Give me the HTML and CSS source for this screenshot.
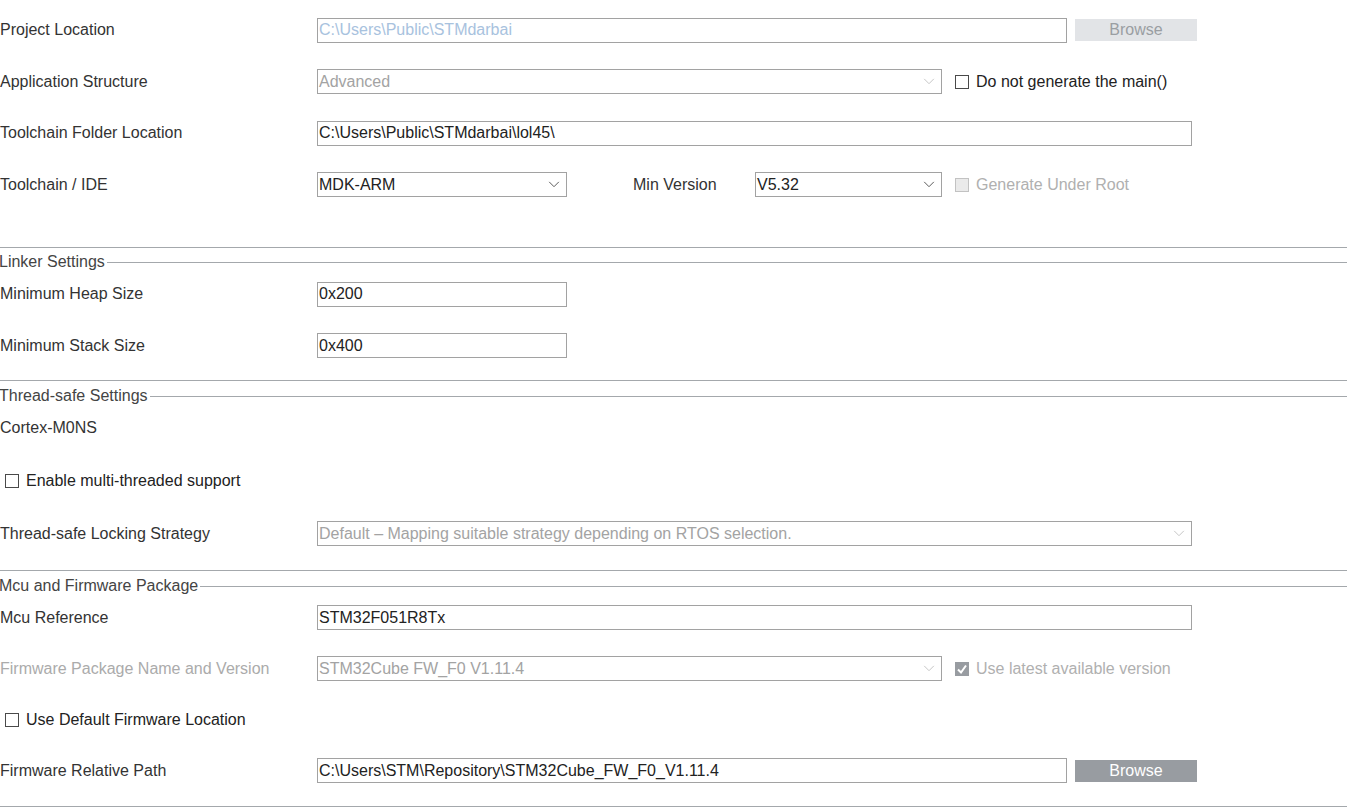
FILE: index.html
```html
<!DOCTYPE html>
<html>
<head>
<meta charset="utf-8">
<link rel="stylesheet" href="styles.css">
</head>
<body>
<div class="page">
  <section class="sec sec-top">
    <div class="row">
      <div class="label">Project Location</div>
      <div class="box w750 text-blue">C:\Users\Public\STMdarbai</div>
      <div class="btn btn-disabled">Browse</div>
    </div>
    <div class="row">
      <div class="label">Application Structure</div>
      <div class="box select w625 text-dis">Advanced<svg class="chev chev-dis" viewBox="0 0 13 8"><polyline points="1,1 6.5,6.5 12,1"/></svg></div>
      <label class="cb-wrap ml13"><span class="cb"></span><span class="cb-text">Do not generate the main()</span></label>
    </div>
    <div class="row">
      <div class="label">Toolchain Folder Location</div>
      <div class="box w875">C:\Users\Public\STMdarbai\lol45\</div>
    </div>
    <div class="row">
      <div class="label">Toolchain / IDE</div>
      <div class="box select w250">MDK-ARM<svg class="chev" viewBox="0 0 13 8"><polyline points="1,1 6.5,6.5 12,1"/></svg></div>
      <div class="minlabel">Min Version</div>
      <div class="box select w187">V5.32<svg class="chev" viewBox="0 0 13 8"><polyline points="1,1 6.5,6.5 12,1"/></svg></div>
      <label class="cb-wrap ml13"><span class="cb cb-dis"></span><span class="cb-text text-dis2">Generate Under Root</span></label>
    </div>
  </section>

  <section class="sec sec-linker">
    <div class="title">Linker Settings</div>
    <div class="row">
      <div class="label">Minimum Heap Size</div>
      <div class="box w250">0x200</div>
    </div>
    <div class="row">
      <div class="label">Minimum Stack Size</div>
      <div class="box w250">0x400</div>
    </div>
  </section>

  <section class="sec sec-thread">
    <div class="title">Thread-safe Settings</div>
    <div class="row">
      <div class="label">Cortex-M0NS</div>
    </div>
    <div class="row">
      <label class="cb-wrap pl5"><span class="cb"></span><span class="cb-text">Enable multi-threaded support</span></label>
    </div>
    <div class="row">
      <div class="label">Thread-safe Locking Strategy</div>
      <div class="box select w875 text-dis">Default – Mapping suitable strategy depending on RTOS selection.<svg class="chev chev-dis" viewBox="0 0 13 8"><polyline points="1,1 6.5,6.5 12,1"/></svg></div>
    </div>
  </section>

  <section class="sec sec-mcu">
    <div class="title">Mcu and Firmware Package</div>
    <div class="row">
      <div class="label">Mcu Reference</div>
      <div class="box w875">STM32F051R8Tx</div>
    </div>
    <div class="row">
      <div class="label text-dis2">Firmware Package Name and Version</div>
      <div class="box select w625 text-dis">STM32Cube FW_F0 V1.11.4<svg class="chev chev-dis" viewBox="0 0 13 8"><polyline points="1,1 6.5,6.5 12,1"/></svg></div>
      <label class="cb-wrap ml13"><span class="cb cb-checked"><svg viewBox="0 0 14 14"><polyline points="3,7.5 6,10.5 11,3.5"/></svg></span><span class="cb-text text-dis2">Use latest available version</span></label>
    </div>
    <div class="row">
      <label class="cb-wrap pl5"><span class="cb"></span><span class="cb-text">Use Default Firmware Location</span></label>
    </div>
    <div class="row">
      <div class="label">Firmware Relative Path</div>
      <div class="box w750">C:\Users\STM\Repository\STM32Cube_FW_F0_V1.11.4</div>
      <div class="btn btn-enabled">Browse</div>
    </div>
  </section>
  <div class="endline"></div>
</div>
</body>
</html>
```

FILE: styles.css
```css
html, body {
  margin: 0;
  padding: 0;
  background: #ffffff;
  overflow: hidden;
}

body {
  font-family: "Liberation Sans", Arial, sans-serif;
  font-size: 16px;
  color: #333333;
}

.page {
  width: 1347px;
}

.sec {
  display: flex;
  flex-direction: column;
}

.sec-top {
  padding-top: 12.5px;
  padding-bottom: 44.5px;
  gap: 16.5px;
}

.sec-linker,
.sec-thread,
.sec-mcu {
  border-top: 1px solid #a4a8ac;
}

.sec-linker {
  row-gap: 16.5px;
  padding-bottom: 17px;
}

.sec-thread {
  row-gap: 18px;
  padding-bottom: 19px;
}

.sec-mcu {
  row-gap: 16px;
  padding-bottom: 18px;
}

.title {
  height: 29px;
  display: flex;
  align-items: center;
  margin-left: -1px;
  color: #444444;
  margin-bottom: calc(-1 * var(--g, 16.5px));
}

.sec-thread .title { --g: 18px; }
.sec-mcu .title { --g: 16px; }

.title::after {
  content: "";
  flex: 1;
  height: 0;
  border-top: 1px solid #a4a8ac;
  margin-left: 2px;
  margin-top: 1px;
}

.row {
  height: 35px;
  display: flex;
  align-items: center;
}

.label {
  width: 317px;
  flex: none;
  white-space: nowrap;
}

.box {
  box-sizing: border-box;
  height: 25px;
  border: 1px solid #a2a2a2;
  padding: 0 1px;
  display: flex;
  align-items: center;
  color: #222222;
  white-space: nowrap;
  flex: none;
  position: relative;
}

.select {
  justify-content: space-between;
  padding-right: 6px;
}

.w250 { width: 250px; }
.w187 { width: 187px; }
.w625 { width: 625px; }
.w750 { width: 750px; }
.w875 { width: 875px; }

.text-blue { color: #a8c2de; }
.text-dis { color: #a3a3a3; }
.text-dis2 { color: #ababab; }

.chev {
  width: 12px;
  height: 7px;
  flex: none;
}

.chev polyline {
  fill: none;
  stroke: #555555;
  stroke-width: 1.1;
}

.chev-dis polyline {
  stroke: #c4c4c4;
}

.minlabel {
  margin-left: 66px;
  width: 122px;
  flex: none;
}

.btn {
  box-sizing: border-box;
  margin-left: 8px;
  width: 122px;
  height: 22px;
  display: flex;
  align-items: center;
  justify-content: center;
  flex: none;
}

.btn-disabled {
  background: #e2e4e7;
  color: #9a9ea2;
}

.btn-enabled {
  background: #989ca1;
  color: #ffffff;
}

.cb-wrap {
  display: flex;
  align-items: center;
  white-space: nowrap;
}

.ml13 { margin-left: 13px; }
.pl5 { padding-left: 5px; }

.cb {
  box-sizing: border-box;
  width: 14px;
  height: 14px;
  border: 1px solid #4a4a4a;
  background: #ffffff;
  margin-right: 7px;
  flex: none;
  display: flex;
}

.cb-dis {
  border-color: #c2c2c2;
  background: #eaeaea;
}

.cb-checked {
  border: none;
  background: #989ca1;
}

.cb-checked svg {
  width: 14px;
  height: 14px;
}

.cb-checked polyline {
  fill: none;
  stroke: #ffffff;
  stroke-width: 2;
}

.cb-text {
  color: #222222;
}

.cb-text.text-dis2 {
  color: #b0b0b0;
}

.endline {
  border-top: 1px solid #a4a8ac;
  height: 4px;
}
```
